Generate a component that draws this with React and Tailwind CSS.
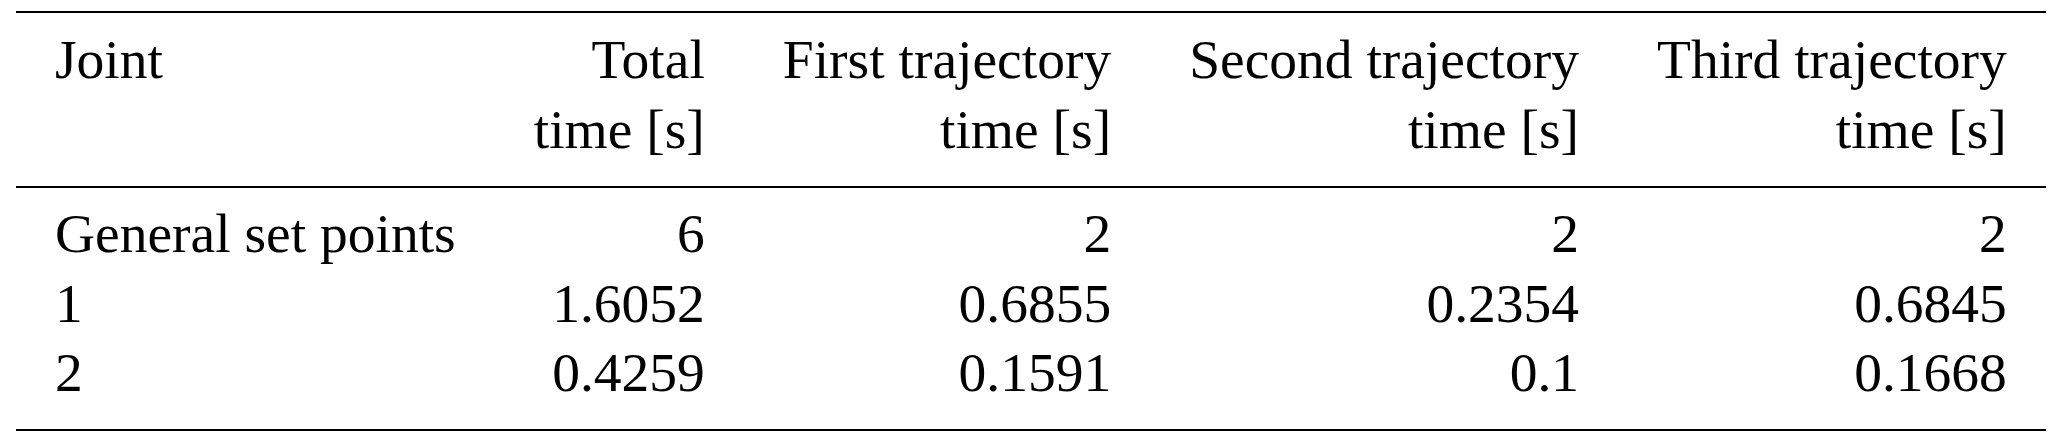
import React from 'react';

const headers = [
  ['Joint', ''],
  ['Total', 'time [s]'],
  ['First trajectory', 'time [s]'],
  ['Second trajectory', 'time [s]'],
  ['Third trajectory', 'time [s]'],
];

const rows = [
  ['General set points', '6', '2', '2', '2'],
  ['1', '1.6052', '0.6855', '0.2354', '0.6845'],
  ['2', '0.4259', '0.1591', '0.1', '0.1668'],
];

const App = () => {
  return (
    <div className="min-h-screen bg-white pl-[16px] pt-[11px] text-black font-['Liberation_Serif']">
      <div className="grid w-max grid-cols-[auto_auto_auto_auto_auto] border-y-2 border-black text-[55.5px] leading-[69.5px] font-['Liberation_Serif']">
        {headers.map(([a, b], i) => (
          <div
            key={i}
            className={`border-b-2 border-black px-[39px] pt-[12px] pb-[22px] whitespace-nowrap ${
              i === 0 ? 'text-left' : 'text-right'
            }`}
          >
            <div>{a}</div>
            <div>{b || '\u00a0'}</div>
          </div>
        ))}
        {rows.map((row, r) =>
          row.map((cell, c) => (
            <div
              key={`${r}-${c}`}
              className={`px-[39px] whitespace-nowrap ${c === 0 ? 'text-left' : 'text-right'} ${
                r === 0 ? 'pt-[11px]' : ''
              } ${r === rows.length - 1 ? 'pb-[21px]' : ''}`}
            >
              {cell}
            </div>
          ))
        )}
      </div>
    </div>
  );
};

export default App;
